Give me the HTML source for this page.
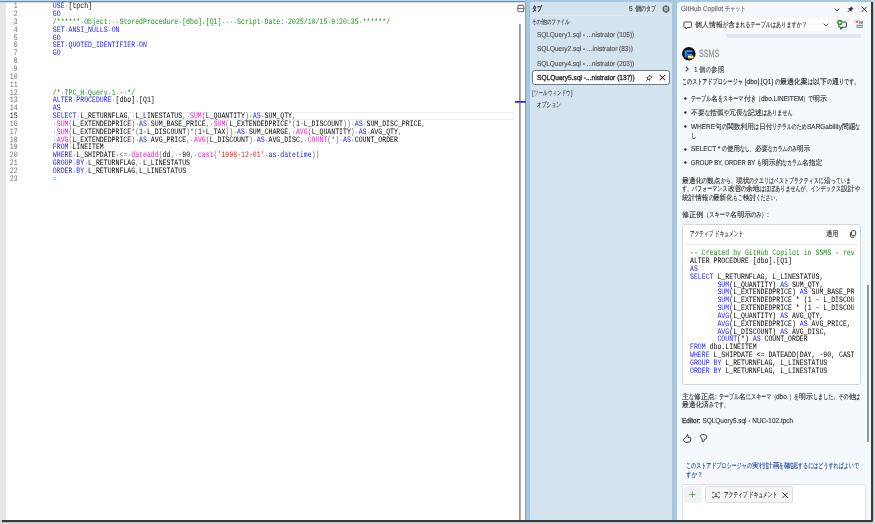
<!DOCTYPE html>
<html lang="ja"><head><meta charset="utf-8"><title>SSMS - GitHub Copilot</title>
<style>
html,body{margin:0;padding:0}
body{width:875px;height:524px;overflow:hidden;position:relative;background:#dedede;font-family:"Liberation Sans", sans-serif;text-rendering:geometricPrecision;-webkit-font-smoothing:antialiased}
div,span,svg{box-sizing:border-box}
.a{position:absolute}
.gl{will-change:transform}
.t{position:absolute;white-space:pre;height:12px;line-height:12px;overflow:visible;-webkit-text-stroke:0.13px}
.r{display:inline-block;white-space:pre;vertical-align:baseline}.r>span{display:inline-block;transform-origin:0 50%;white-space:pre}
.c{position:absolute;white-space:pre;font-family:"Liberation Mono", monospace;font-size:6.53px;letter-spacing:0.0105px;height:8px;line-height:8px;color:#000;transform:scaleY(1.27);transform-origin:0 50%}
.k{color:#1a1aff}.g{color:#149414}.f{color:#ff10d8}.s{color:#f01010}.o{color:#6e6e6e}.n{color:#000}.w{background:linear-gradient(#6ab8cf,#6ab8cf) 50% 54%/1.1px 0.9px no-repeat}.w2{color:#3d9fc0}
.ln{position:absolute;left:0;width:17.6px;text-align:right;font-family:"Liberation Mono", monospace;font-size:6.53px;height:8px;line-height:8px;color:#6a6a6a;transform:scaleY(1.27);transform-origin:0 50%}
</style></head><body>
<div class="a" style="left:2px;top:2px;width:870.5px;height:519.5px;background:#3a3a3a;border-radius:0 0 1.5px 0;box-shadow:0 0 1.6px 0 #505050"></div>
<div class="a" id="win" style="left:0;top:0;width:870.8px;height:519.8px;background:#a6c7df;overflow:hidden">
<div class="a" style="left:0;top:0;width:525.3px;height:1.4px;background:#b8d7ec"></div>
<div class="a" style="left:0;top:1.4px;width:525.3px;height:1px;background:#6f8fa9"></div>
<div class="a" style="left:0;top:2.4px;width:525.3px;height:518px;background:#fff"></div>
<div class="a" style="left:0;top:2.4px;width:5.8px;height:518px;background:#e6e7e8"></div>
<div class="a" style="left:0;top:2px;width:525px;height:1px;background:#d9dadc"></div>
<div class="a" style="left:525.3px;top:1.4px;width:0.8px;height:519px;background:#86a8c6"></div>
<div class="a" style="left:52px;top:112px;width:462px;height:8px;border:1px solid #eceef5;background:#fff"></div>
<div class="a" style="left:519px;top:24px;width:2px;height:496px;background:linear-gradient(90deg,#969696,#969696 55%,#cdcdcd)"></div>
<div class="a" style="left:515px;top:101px;width:11px;height:2px;background:linear-gradient(180deg,#3434d8,#3434d8 60%,#9a9aea)"></div>
<div class="a gl" style="left:0;top:0;width:525px;height:200px">
<div class="ln" style="top:3.25px">1</div>
<div class="c" style="left:52.8px;top:3.25px"><span class="k">USE</span><span class="w"> </span><span class="n">[tpch]</span></div>
<div class="ln" style="top:11.09px">2</div>
<div class="c" style="left:52.8px;top:11.09px"><span class="k">GO</span></div>
<div class="ln" style="top:18.94px">3</div>
<div class="c" style="left:52.8px;top:18.94px"><span class="g">/******</span><span class="w"> </span><span class="g">Object:</span><span class="w"> </span><span class="w"> </span><span class="g">StoredProcedure</span><span class="w"> </span><span class="g">[dbo].[Q1]</span><span class="w"> </span><span class="w"> </span><span class="w"> </span><span class="w"> </span><span class="g">Script</span><span class="w"> </span><span class="g">Date:</span><span class="w"> </span><span class="g">2025/10/15</span><span class="w"> </span><span class="g">9:20:35</span><span class="w"> </span><span class="g">******/</span></div>
<div class="ln" style="top:26.79px">4</div>
<div class="c" style="left:52.8px;top:26.79px"><span class="k">SET</span><span class="w"> </span><span class="k">ANSI_NULLS</span><span class="w"> </span><span class="k">ON</span></div>
<div class="ln" style="top:34.63px">5</div>
<div class="c" style="left:52.8px;top:34.63px"><span class="k">GO</span></div>
<div class="ln" style="top:42.48px">6</div>
<div class="c" style="left:52.8px;top:42.48px"><span class="k">SET</span><span class="w"> </span><span class="k">QUOTED_IDENTIFIER</span><span class="w"> </span><span class="k">ON</span></div>
<div class="ln" style="top:50.32px">7</div>
<div class="c" style="left:52.8px;top:50.32px"><span class="k">GO</span></div>
<div class="ln" style="top:58.16px">8</div>
<div class="ln" style="top:66.01px">9</div>
<div class="ln" style="top:73.86px">10</div>
<div class="ln" style="top:81.70px">11</div>
<div class="ln" style="top:89.55px">12</div>
<div class="c" style="left:52.8px;top:89.55px"><span class="g">/*</span><span class="w"> </span><span class="g">TPC_H</span><span class="w"> </span><span class="g">Query</span><span class="w"> </span><span class="g">1</span><span class="w"> </span><span class="g">-</span><span class="w"> </span><span class="g">*/</span></div>
<div class="ln" style="top:97.39px">13</div>
<div class="c" style="left:52.8px;top:97.39px"><span class="k">ALTER</span><span class="w"> </span><span class="k">PROCEDURE</span><span class="w"> </span><span class="n">[dbo]</span><span class="o">.</span><span class="n">[Q1]</span></div>
<div class="ln" style="top:105.23px">14</div>
<div class="c" style="left:52.8px;top:105.23px"><span class="k">AS</span></div>
<div class="ln" style="top:113.08px;color:#111">15</div>
<div class="c" style="left:52.8px;top:113.08px"><span class="k">SELECT</span><span class="w"> </span><span class="n">L_RETURNFLAG</span><span class="o">,</span><span class="w"> </span><span class="n">L_LINESTATUS</span><span class="o">,</span><span class="w"> </span><span class="f">SUM</span><span class="o">(</span><span class="n">L_QUANTITY</span><span class="o">)</span><span class="w"> </span><span class="k">AS</span><span class="w"> </span><span class="n">SUM_QTY</span><span class="o">,</span></div>
<div class="ln" style="top:120.92px">16</div>
<div class="c" style="left:52.8px;top:120.92px"><span class="w"> </span><span class="f">SUM</span><span class="o">(</span><span class="n">L_EXTENDEDPRICE</span><span class="o">)</span><span class="w"> </span><span class="k">AS</span><span class="w"> </span><span class="n">SUM_BASE_PRICE</span><span class="o">,</span><span class="w"> </span><span class="f">SUM</span><span class="o">(</span><span class="n">L_EXTENDEDPRICE</span><span class="o">*(</span><span class="n">1</span><span class="o">-</span><span class="n">L_DISCOUNT</span><span class="o">))</span><span class="w"> </span><span class="k">AS</span><span class="w"> </span><span class="n">SUM_DISC_PRICE</span><span class="o">,</span></div>
<div class="ln" style="top:128.77px">17</div>
<div class="c" style="left:52.8px;top:128.77px"><span class="w"> </span><span class="f">SUM</span><span class="o">(</span><span class="n">L_EXTENDEDPRICE</span><span class="o">*(</span><span class="n">1</span><span class="o">-</span><span class="n">L_DISCOUNT</span><span class="o">)*(</span><span class="n">1</span><span class="o">+</span><span class="n">L_TAX</span><span class="o">))</span><span class="w"> </span><span class="k">AS</span><span class="w"> </span><span class="n">SUM_CHARGE</span><span class="o">,</span><span class="w"> </span><span class="f">AVG</span><span class="o">(</span><span class="n">L_QUANTITY</span><span class="o">)</span><span class="w"> </span><span class="k">AS</span><span class="w"> </span><span class="n">AVG_QTY</span><span class="o">,</span></div>
<div class="ln" style="top:136.62px">18</div>
<div class="c" style="left:52.8px;top:136.62px"><span class="w"> </span><span class="f">AVG</span><span class="o">(</span><span class="n">L_EXTENDEDPRICE</span><span class="o">)</span><span class="w"> </span><span class="k">AS</span><span class="w"> </span><span class="n">AVG_PRICE</span><span class="o">,</span><span class="w"> </span><span class="f">AVG</span><span class="o">(</span><span class="n">L_DISCOUNT</span><span class="o">)</span><span class="w"> </span><span class="k">AS</span><span class="w"> </span><span class="n">AVG_DISC</span><span class="o">,</span><span class="w"> </span><span class="f">COUNT</span><span class="o">(*)</span><span class="w"> </span><span class="k">AS</span><span class="w"> </span><span class="n">COUNT_ORDER</span></div>
<div class="ln" style="top:144.46px">19</div>
<div class="c" style="left:52.8px;top:144.46px"><span class="k">FROM</span><span class="w"> </span><span class="n">LINEITEM</span></div>
<div class="ln" style="top:152.31px">20</div>
<div class="c" style="left:52.8px;top:152.31px"><span class="k">WHERE</span><span class="w"> </span><span class="n">L_SHIPDATE</span><span class="w"> </span><span class="o">&lt;=</span><span class="w"> </span><span class="f">dateadd</span><span class="o">(</span><span class="n">dd</span><span class="o">,</span><span class="w"> </span><span class="o">-</span><span class="n">90</span><span class="o">,</span><span class="w"> </span><span class="f">cast</span><span class="o">(</span><span class="s">'1998-12-01'</span><span class="w"> </span><span class="k">as</span><span class="w"> </span><span class="k">datetime</span><span class="o">))</span></div>
<div class="ln" style="top:160.15px">21</div>
<div class="c" style="left:52.8px;top:160.15px"><span class="k">GROUP</span><span class="w"> </span><span class="k">BY</span><span class="w"> </span><span class="n">L_RETURNFLAG</span><span class="o">,</span><span class="w"> </span><span class="n">L_LINESTATUS</span></div>
<div class="ln" style="top:168.00px">22</div>
<div class="c" style="left:52.8px;top:168.00px"><span class="k">ORDER</span><span class="w"> </span><span class="k">BY</span><span class="w"> </span><span class="n">L_RETURNFLAG</span><span class="o">,</span><span class="n">L_LINESTATUS</span></div>
<div class="ln" style="top:175.84px">23</div>
<div class="c" style="left:52.8px;top:175.84px"><span class="w2">=</span></div>
</div>
<svg class="a" style="left:515.5px;top:3.5px" width="10" height="10" viewBox="0 0 10 10"><rect x="1.9" y="1.1" width="5.8" height="6.7" rx="1.5" fill="none" stroke="#6c6c6c" stroke-width="1.1"/><path d="M0.9 4.45H8.5" stroke="#777" stroke-width="1.1"/></svg>
<div class="a" style="left:529.6px;top:2.1px;width:142.9px;height:520px;background:#d4e4ef;border-radius:2.5px 2.5px 0 0"></div>
<div class="a" style="left:531px;top:15px;width:140px;height:0.8px;background:#dde9f2"></div>
<div class="a" style="left:532px;top:70.4px;width:137.9px;height:14.7px;background:#fff;border:1.1px solid #64798e;border-radius:2.6px"></div>
<svg class="a" style="left:661.5px;top:4.9px" width="8" height="8" viewBox="0 0 16 16"><path fill="#5e5e5e" fill-rule="evenodd" d="M5.62 0.68L10.38 0.68L10.48 2.10L11.87 2.90L13.15 2.28L15.53 6.40L14.35 7.20L14.35 8.80L15.53 9.60L13.15 13.72L11.87 13.10L10.48 13.90L10.38 15.32L5.62 15.32L5.52 13.90L4.13 13.10L2.85 13.72L0.47 9.60L1.65 8.80L1.65 7.20L0.47 6.40L2.85 2.28L4.13 2.90L5.52 2.10ZM8 3.7a4.3 4.3 0 1 0 0 8.6a4.3 4.3 0 1 0 0-8.6Z"/><path fill="#747474" fill-rule="evenodd" d="M8 5.0a3.0 3.0 0 1 0 0 6.0a3.0 3.0 0 1 0 0-6.0ZM8 6.5a1.5 1.5 0 1 0 0 3.0a1.5 1.5 0 1 0 0-3.0Z"/></svg>
<svg class="a" style="left:645px;top:74px" width="8" height="8" viewBox="0 0 16 16"><path fill="none" stroke="#333" stroke-width="1.9" stroke-linejoin="round" d="M9.5 2.500l4 4-1.500.700-2.500 2.500-.500 3-5.700-5.700 3-.500 2.500-2.500zM5.800 10.200 2.500 13.500"/></svg>
<svg class="a" style="left:659.3px;top:74.4px" width="7" height="7" viewBox="0 0 14 14"><path stroke="#2a2a2a" stroke-width="2.1" d="M1.500 1.500l11 11M12.500 1.500l-11 11"/></svg>
<div class="a" style="left:676.9px;top:2.1px;width:194px;height:520px;background:#f5f8fc;border-radius:2.5px 0 0 0"></div>
<svg class="a" style="left:833.7px;top:6.6px" width="6" height="6" viewBox="0 0 12 12"><path fill="none" stroke="#505050" stroke-width="1.9" d="M1.200 3.200 6 8l4.800-4.800"/></svg>
<svg class="a" style="left:847px;top:5.7px" width="6.8" height="6.8" viewBox="0 0 16 16"><path fill="#2e2e2e" stroke="#2e2e2e" stroke-width="1" stroke-linejoin="round" d="M9.500 1.500l5 5-1.800.700-2.200 2.200-.800 3.400-6.500-6.500 3.400-.800 2.200-2.200z"/><path stroke="#2e2e2e" stroke-width="1.900" d="M6 10 1.200 14.800"/></svg>
<svg class="a" style="left:860.7px;top:5.8px" width="6.5" height="6.5" viewBox="0 0 14 14"><path stroke="#3a3a3a" stroke-width="2" d="M1 1l12 12M13 1 1 13"/></svg>
<div class="a" style="left:725.9px;top:34px;width:135.5px;height:3.6px;background:#e3e5f7;border-radius:0 0 2.500px 2.500px"></div>
<div class="a" style="left:679px;top:17.6px;width:153.2px;height:13.1px;background:#fcfdff;border-radius:2.5px"></div>
<svg class="a" style="left:683.1px;top:21px" width="9.4" height="8.8" viewBox="0 0 9.4 8.8"><path fill="none" stroke="#484848" stroke-width="1" stroke-linejoin="round" d="M1.800 1h5.900q0.900 0 0.900 0.900v3.700q0 0.900-0.900 0.900H4.600L3 8V6.500H1.800q-0.900 0-0.900-0.900V1.900q0-0.900 0.900-0.900z"/></svg>
<svg class="a" style="left:822.5px;top:21.900px" width="6" height="6" viewBox="0 0 12 12"><path fill="none" stroke="#484848" stroke-width="1.9" d="M1.200 3.200 6 8l4.800-4.800"/></svg>
<svg class="a" style="left:835.5px;top:18.8px" width="12" height="12" viewBox="0 0 24 24"><path fill="none" stroke="#484848" stroke-width="2.200" stroke-linejoin="round" d="M12.500 6h5.500q3 0 3 3v4.500q0 3-3 3h-5l-3.500 3.500v-3.500h-1q-3 0-3-3v-1"/><circle cx="7.600" cy="7" r="5.300" fill="#12a012"/><path stroke="#fff" stroke-width="1.900" d="M7.600 4v6M4.600 7h6"/></svg>
<svg class="a" style="left:853.5px;top:19px" width="11" height="11" viewBox="0 0 22 22"><path stroke="#e0283c" stroke-width="1.800" d="M3.200 2.600l5 5.600M8.200 2.600l-5 5.600"/><rect x="10" y="4.500" width="8" height="4.800" fill="#909090"/><path stroke="#666" stroke-width="1.800" d="M4.800 12.600h13.200M4.800 16.400h13.200"/></svg>
<svg class="a" style="left:681.2px;top:45.8px" width="15.6" height="15.6" viewBox="-2.35 -2.35 36.7 36.7"><defs><linearGradient id="lg" x1="0" y1="1" x2="1" y2="0"><stop offset="0" stop-color="#3f63e8"/><stop offset="0.5" stop-color="#1f8ff5"/><stop offset="1" stop-color="#14b8ff"/></linearGradient></defs><circle cx="16" cy="16" r="17.8" fill="#fff" opacity="0.85"/><circle cx="16" cy="16" r="16" fill="#0b0b0e"/><path fill="url(#lg)" d="M10 7.500h12.500c3.500 0 3.500 5 0 5H11.500v3h12v4.500h-12V25h-2c-2.500 0-3.500-1.500-3.500-4V11.500c0-2.500 1.500-4 4-4z"/><path fill="#0d2a66" opacity="0.75" d="M12 12.500h11v3H12z"/><rect x="13.400" y="20" width="13.600" height="6.800" rx="1" fill="#ffd23e"/><rect x="14.400" y="21" width="11.600" height="2" fill="#fff2a8"/></svg>
<svg class="a" style="left:684.4px;top:66.300px" width="6" height="6" viewBox="0 0 12 12"><path fill="none" stroke="#3a3a3a" stroke-width="2.1" d="M3.500 1.300 8.200 6l-4.700 4.700"/></svg>
<svg class="a" style="left:683px;top:95.9px" width="5" height="5" viewBox="0 0 5 5"><circle cx="2.4" cy="2.5" r="1.2" fill="#2a2a2a"/></svg>
<svg class="a" style="left:683px;top:110.1px" width="5" height="5" viewBox="0 0 5 5"><circle cx="2.4" cy="2.5" r="1.2" fill="#2a2a2a"/></svg>
<svg class="a" style="left:683px;top:124.2px" width="5" height="5" viewBox="0 0 5 5"><circle cx="2.4" cy="2.5" r="1.2" fill="#2a2a2a"/></svg>
<svg class="a" style="left:683px;top:146.5px" width="5" height="5" viewBox="0 0 5 5"><circle cx="2.4" cy="2.5" r="1.2" fill="#2a2a2a"/></svg>
<svg class="a" style="left:683px;top:160.4px" width="5" height="5" viewBox="0 0 5 5"><circle cx="2.4" cy="2.5" r="1.2" fill="#2a2a2a"/></svg>
<div class="a" style="left:682.1px;top:224.3px;width:178.8px;height:160.5px;background:#fff;border:1px solid #d3d6db;border-radius:2.8px"></div>
<div class="a" style="left:684.5px;top:243.700px;width:174.500px;height:0.9px;background:#ecedf0"></div>
<svg class="a" style="left:849.4px;top:229.500px" width="8" height="8" viewBox="0 0 16 16"><rect x="5.200" y="1.300" width="8" height="10" rx="2" fill="none" stroke="#3c3c3c" stroke-width="2"/><path fill="none" stroke="#3c3c3c" stroke-width="2" d="M2.800 4.500v7.500c0 1.600.800 2.400 2.400 2.400h5.800"/></svg>
<div class="a gl" style="left:690.4px;top:245px;width:163.9px;height:135px;overflow:hidden">
<div class="c" style="left:0;top:5.30px"><span class="g">-- Created by GitHub Copilot in SSMS - review carefully before executing</span></div>
<div class="c" style="left:0;top:13.13px"><span class="n">ALTER PROCEDURE [dbo].[Q1]</span></div>
<div class="c" style="left:0;top:20.96px"><span class="k">AS</span></div>
<div class="c" style="left:0;top:28.79px"><span class="k">SELECT</span><span class="n"> L_RETURNFLAG, L_LINESTATUS,</span></div>
<div class="c" style="left:0;top:36.62px"><span class="n">       </span><span class="k">SUM</span><span class="n">(L_QUANTITY) </span><span class="k">AS</span><span class="n"> SUM_QTY,</span></div>
<div class="c" style="left:0;top:44.45px"><span class="n">       </span><span class="k">SUM</span><span class="n">(L_EXTENDEDPRICE) </span><span class="k">AS</span><span class="n"> SUM_BASE_PRICE,</span></div>
<div class="c" style="left:0;top:52.28px"><span class="n">       </span><span class="k">SUM</span><span class="n">(L_EXTENDEDPRICE * (1 - L_DISCOUNT)) </span><span class="k">AS</span><span class="n"> SUM_DISC_PRICE,</span></div>
<div class="c" style="left:0;top:60.11px"><span class="n">       </span><span class="k">SUM</span><span class="n">(L_EXTENDEDPRICE * (1 - L_DISCOUNT) * (1 + L_TAX)) </span><span class="k">AS</span><span class="n"> SUM_CHARGE,</span></div>
<div class="c" style="left:0;top:67.94px"><span class="n">       </span><span class="k">AVG</span><span class="n">(L_QUANTITY) </span><span class="k">AS</span><span class="n"> AVG_QTY,</span></div>
<div class="c" style="left:0;top:75.77px"><span class="n">       </span><span class="k">AVG</span><span class="n">(L_EXTENDEDPRICE) </span><span class="k">AS</span><span class="n"> AVG_PRICE,</span></div>
<div class="c" style="left:0;top:83.60px"><span class="n">       </span><span class="k">AVG</span><span class="n">(L_DISCOUNT) </span><span class="k">AS</span><span class="n"> AVG_DISC,</span></div>
<div class="c" style="left:0;top:91.43px"><span class="n">       </span><span class="k">COUNT</span><span class="n">(*) </span><span class="k">AS</span><span class="n"> COUNT_ORDER</span></div>
<div class="c" style="left:0;top:99.26px"><span class="k">FROM</span><span class="n"> dbo.LINEITEM</span></div>
<div class="c" style="left:0;top:107.09px"><span class="k">WHERE</span><span class="n"> L_SHIPDATE &lt;= DATEADD(DAY, -90, CAST('1998-12-01' AS DATETIME))</span></div>
<div class="c" style="left:0;top:114.92px"><span class="k">GROUP BY</span><span class="n"> L_RETURNFLAG, L_LINESTATUS</span></div>
<div class="c" style="left:0;top:122.75px"><span class="k">ORDER BY</span><span class="n"> L_RETURNFLAG, L_LINESTATUS</span></div>
</div>
<div class="a" style="left:867px;top:285px;width:2px;height:157px;background:linear-gradient(90deg,#b8b8b8,#7c7c7c 50%,#b0b0b0)"></div>
<svg class="a" style="left:682.6px;top:433.8px" width="9" height="9" viewBox="0 0 9 9"><path fill="none" stroke="#3a3a3a" stroke-width="1" stroke-linejoin="round" stroke-linecap="round" d="M4.600 0.900q0.900 0.300 0.700 1.600l-0.200 1h1.700q1.200 0.100 1 1.300l-0.500 2.300q-0.300 1.100-1.400 1.100l-2.900 0.200q-0.800 0-1.500-0.800l-0.800-1q-0.600-0.900 0.200-1.600l1.800-1.200q1-0.900 1.200-2.100q0.100-0.900 0.700-0.800z"/></svg>
<svg class="a" style="left:698.7px;top:433.8px" width="9" height="9" viewBox="0 0 9 9"><path fill="none" stroke="#3a3a3a" stroke-width="1" stroke-linejoin="round" stroke-linecap="round" d="M1.300 2.500q-0.600-0.900 0.400-1.300l1.600-0.600q0.900-0.300 1.800 0l1.800 0.700q1.100 0.500 0.900 1.500l-0.300 1.300q-0.300 1-1.300 1.100l-1 0.100l-0.300 1.800q-0.200 0.900-0.900 0.700q-0.700-0.200-0.800-1.100l-0.200-1.700q-0.100-0.900-0.700-1.400z"/></svg>
<div class="a" style="left:681.7px;top:484.400px;width:184px;height:40px;background:#fff;border:0.9px solid #dde3ec;border-radius:2.5px"></div>
<div class="a" style="left:683.6px;top:486.300px;width:18.800px;height:16.700px;background:#f1f2f4;border-radius:2.4px"></div>
<svg class="a" style="left:689px;top:491.200px" width="7" height="7" viewBox="0 0 14 14"><path stroke="#2a9a2a" stroke-width="1.500" d="M7 1v12M1 7h12"/></svg>
<div class="a" style="left:704.700px;top:486.300px;width:88.400px;height:16.700px;background:#f4f5f7;border:0.9px solid #dadde3;border-radius:2.4px"></div>
<svg class="a" style="left:712.200px;top:490.700px" width="8" height="8" viewBox="0 0 16 16"><path fill="none" stroke="#3c3c3c" stroke-width="1.700" d="M1.500 5.200V2.500H4.800M11.200 2.500h3.300V5.200M14.500 10.800v2.700H11.200M4.800 13.500H1.500V10.800"/><circle cx="8" cy="6.200" r="1.900" fill="#444"/><path fill="#444" d="M4.300 12.200c0-2.400 1.600-3.400 3.700-3.400s3.700 1 3.700 3.400z"/></svg>
<svg class="a" style="left:781.600px;top:491.500px" width="6.400" height="6.400" viewBox="0 0 14 14"><path stroke="#333" stroke-width="2" d="M1 1l12 12M13 1 1 13"/></svg>
</div>
<div class="t" style="left:531.8px;top:2.61px;font-size:7.2px;color:#1e1e1e;-webkit-text-stroke:0.3px"><span class="r" style="width:10.20px"><span style="transform:scaleX(0.6930)">タブ</span></span></div>
<div class="t" style="left:629.4px;top:2.61px;font-size:7.2px;color:#3a3a3a"><span class="r" style="width:5.40px"><span style="transform:scaleX(0.9000)">5 </span></span><span class="r" style="width:6.71px"><span style="transform:scaleX(0.9342)">個</span></span><span class="r" style="width:14.89px"><span style="transform:scaleX(0.6742)">のタブ</span></span></div>
<div class="t" style="left:532.2px;top:16.81px;font-size:6.6px;color:#4a4a4a"><span class="r" style="width:9.05px"><span style="transform:scaleX(0.6704)">その</span></span><span class="r" style="width:6.13px"><span style="transform:scaleX(0.9289)">他</span></span><span class="r" style="width:22.62px"><span style="transform:scaleX(0.6704)">のファイル</span></span></div>
<div class="t" style="left:537.0px;top:28.61px;font-size:7.2px;color:#505050"><span class="r" style="width:97.20px"><span style="transform:scaleX(0.8946)">SQLQuery1.sql - ...nistrator (105))</span></span></div>
<div class="t" style="left:537.0px;top:42.61px;font-size:7.2px;color:#505050"><span class="r" style="width:95.80px"><span style="transform:scaleX(0.9016)">SQLQuery2.sql - ...inistrator (83))</span></span></div>
<div class="t" style="left:537.0px;top:57.61px;font-size:7.2px;color:#505050"><span class="r" style="width:97.20px"><span style="transform:scaleX(0.8946)">SQLQuery4.sql - ...nistrator (203))</span></span></div>
<div class="t" style="left:537.0px;top:71.61px;font-size:7.2px;color:#1e1e1e;-webkit-text-stroke:0.3px"><span class="r" style="width:97.70px"><span style="transform:scaleX(0.9160)">SQLQuery5.sql -...nistrator (137))</span></span></div>
<div class="t" style="left:532.0px;top:87.81px;font-size:6.6px;color:#4a4a4a"><span class="r" style="width:1.52px"><span style="transform:scaleX(0.8250)">[</span></span><span class="r" style="width:13.45px"><span style="transform:scaleX(0.6693)">ツール</span></span><span class="r" style="width:1.52px"><span style="transform:scaleX(0.8250)"> </span></span><span class="r" style="width:22.59px"><span style="transform:scaleX(0.6693)">ウィンドウ</span></span><span class="r" style="width:1.52px"><span style="transform:scaleX(0.8250)">]</span></span></div>
<div class="t" style="left:537.0px;top:98.61px;font-size:7.2px;color:#444"><span class="r" style="width:24.00px"><span style="transform:scaleX(0.6525)">オプション</span></span></div>
<div class="t" style="left:681.0px;top:2.61px;font-size:7.2px;color:#6a6a6a"><span class="r" style="width:43.88px"><span style="transform:scaleX(0.9000)">GitHub Copilot </span></span><span class="r" style="width:20.73px"><span style="transform:scaleX(0.7040)">チャット</span></span></div>
<div class="t" style="left:695.4px;top:18.61px;font-size:7.2px;color:#333"><span class="r" style="width:27.92px"><span style="transform:scaleX(0.9711)">個人情報</span></span><span class="r" style="width:5.16px"><span style="transform:scaleX(0.7008)">が</span></span><span class="r" style="width:6.98px"><span style="transform:scaleX(0.9711)">含</span></span><span class="r" style="width:71.94px"><span style="transform:scaleX(0.7008)">まれるテーブルはありますか？</span></span></div>
<div class="t" style="left:699.4px;top:48.46px;font-size:10.5px;color:#8a8a8a"><span class="r" style="width:20.40px"><span style="transform:scaleX(0.6854)">SSMS</span></span></div>
<div class="t" style="left:693.5px;top:63.61px;font-size:7.2px;color:#444"><span class="r" style="width:5.40px"><span style="transform:scaleX(0.9000)">1 </span></span><span class="r" style="width:6.71px"><span style="transform:scaleX(0.9340)">個</span></span><span class="r" style="width:4.96px"><span style="transform:scaleX(0.6740)">の</span></span><span class="r" style="width:13.43px"><span style="transform:scaleX(0.9340)">参照</span></span></div>
<div class="t" style="left:682.2px;top:75.61px;font-size:7.2px;color:#222"><span class="r" style="width:60.99px"><span style="transform:scaleX(0.6922)">このストアドプロシージャ</span></span><span class="r" style="width:32.01px"><span style="transform:scaleX(0.9000)"> [dbo].[Q1] </span></span><span class="r" style="width:5.09px"><span style="transform:scaleX(0.6922)">の</span></span><span class="r" style="width:27.58px"><span style="transform:scaleX(0.9592)">最適化案</span></span><span class="r" style="width:5.09px"><span style="transform:scaleX(0.6922)">は</span></span><span class="r" style="width:13.79px"><span style="transform:scaleX(0.9592)">以下</span></span><span class="r" style="width:5.09px"><span style="transform:scaleX(0.6922)">の</span></span><span class="r" style="width:6.89px"><span style="transform:scaleX(0.9592)">通</span></span><span class="r" style="width:20.26px"><span style="transform:scaleX(0.6922)">りです。</span></span></div>
<div class="t" style="left:691.1px;top:92.61px;font-size:7.2px;color:#333"><span class="r" style="width:20.36px"><span style="transform:scaleX(0.6955)">テーブル</span></span><span class="r" style="width:6.93px"><span style="transform:scaleX(0.9638)">名</span></span><span class="r" style="width:25.47px"><span style="transform:scaleX(0.6955)">をスキーマ</span></span><span class="r" style="width:6.93px"><span style="transform:scaleX(0.9638)">付</span></span><span class="r" style="width:10.12px"><span style="transform:scaleX(0.6955)">き（</span></span><span class="r" style="width:42.43px"><span style="transform:scaleX(0.9000)">dbo.LINEITEM</span></span><span class="r" style="width:10.12px"><span style="transform:scaleX(0.6955)">）で</span></span><span class="r" style="width:13.85px"><span style="transform:scaleX(0.9638)">明示</span></span></div>
<div class="t" style="left:691.1px;top:106.61px;font-size:7.2px;color:#333"><span class="r" style="width:13.86px"><span style="transform:scaleX(0.9640)">不要</span></span><span class="r" style="width:5.12px"><span style="transform:scaleX(0.6957)">な</span></span><span class="r" style="width:13.86px"><span style="transform:scaleX(0.9640)">括弧</span></span><span class="r" style="width:5.12px"><span style="transform:scaleX(0.6957)">や</span></span><span class="r" style="width:13.86px"><span style="transform:scaleX(0.9640)">冗長</span></span><span class="r" style="width:5.12px"><span style="transform:scaleX(0.6957)">な</span></span><span class="r" style="width:13.86px"><span style="transform:scaleX(0.9640)">記述</span></span><span class="r" style="width:30.71px"><span style="transform:scaleX(0.6957)">はありません</span></span></div>
<div class="t" style="left:691.1px;top:120.61px;font-size:7.2px;color:#333"><span class="r" style="width:24.09px"><span style="transform:scaleX(0.9000)">WHERE</span></span><span class="r" style="width:6.72px"><span style="transform:scaleX(0.9351)">句</span></span><span class="r" style="width:4.97px"><span style="transform:scaleX(0.6748)">の</span></span><span class="r" style="width:26.88px"><span style="transform:scaleX(0.9351)">関数利用</span></span><span class="r" style="width:4.97px"><span style="transform:scaleX(0.6748)">は</span></span><span class="r" style="width:13.44px"><span style="transform:scaleX(0.9351)">日付</span></span><span class="r" style="width:34.75px"><span style="transform:scaleX(0.6748)">リテラルのため</span></span><span class="r" style="width:34.88px"><span style="transform:scaleX(0.9000)">SARGability</span></span><span class="r" style="width:13.44px"><span style="transform:scaleX(0.9351)">問題</span></span><span class="r" style="width:4.97px"><span style="transform:scaleX(0.6748)">な</span></span></div>
<div class="t" style="left:691.1px;top:129.61px;font-size:7.2px;color:#333"><span class="r" style="width:5.50px"><span style="transform:scaleX(0.7473)">し</span></span></div>
<div class="t" style="left:691.1px;top:142.61px;font-size:7.2px;color:#333"><span class="r" style="width:31.16px"><span style="transform:scaleX(0.9000)">SELECT * </span></span><span class="r" style="width:4.87px"><span style="transform:scaleX(0.6619)">の</span></span><span class="r" style="width:13.18px"><span style="transform:scaleX(0.9172)">使用</span></span><span class="r" style="width:14.50px"><span style="transform:scaleX(0.6619)">なし、</span></span><span class="r" style="width:13.18px"><span style="transform:scaleX(0.9172)">必要</span></span><span class="r" style="width:29.22px"><span style="transform:scaleX(0.6619)">なカラムのみ</span></span><span class="r" style="width:13.18px"><span style="transform:scaleX(0.9172)">明示</span></span></div>
<div class="t" style="left:691.1px;top:156.61px;font-size:7.2px;color:#333"><span class="r" style="width:65.84px"><span style="transform:scaleX(0.8200)">GROUP BY, ORDER BY </span></span><span class="r" style="width:5.00px"><span style="transform:scaleX(0.6800)">も</span></span><span class="r" style="width:20.32px"><span style="transform:scaleX(0.9423)">明示的</span></span><span class="r" style="width:20.02px"><span style="transform:scaleX(0.6800)">なカラム</span></span><span class="r" style="width:20.32px"><span style="transform:scaleX(0.9423)">名指定</span></span></div>
<div class="t" style="left:682.2px;top:174.61px;font-size:7.2px;color:#333"><span class="r" style="width:20.25px"><span style="transform:scaleX(0.9393)">最適化</span></span><span class="r" style="width:4.99px"><span style="transform:scaleX(0.6779)">の</span></span><span class="r" style="width:13.50px"><span style="transform:scaleX(0.9393)">観点</span></span><span class="r" style="width:14.85px"><span style="transform:scaleX(0.6779)">から、</span></span><span class="r" style="width:13.50px"><span style="transform:scaleX(0.9393)">現状</span></span><span class="r" style="width:74.80px"><span style="transform:scaleX(0.6779)">のクエリはベストプラクティスに</span></span><span class="r" style="width:6.75px"><span style="transform:scaleX(0.9393)">沿</span></span><span class="r" style="width:19.95px"><span style="transform:scaleX(0.6779)">っていま</span></span></div>
<div class="t" style="left:682.2px;top:182.61px;font-size:7.2px;color:#333"><span class="r" style="width:45.47px"><span style="transform:scaleX(0.6902)">す。パフォーマンス</span></span><span class="r" style="width:13.75px"><span style="transform:scaleX(0.9565)">改善</span></span><span class="r" style="width:5.08px"><span style="transform:scaleX(0.6902)">の</span></span><span class="r" style="width:13.75px"><span style="transform:scaleX(0.9565)">余地</span></span><span class="r" style="width:81.12px"><span style="transform:scaleX(0.6902)">はほぼありませんが、インデックス</span></span><span class="r" style="width:13.75px"><span style="transform:scaleX(0.9565)">設計</span></span><span class="r" style="width:5.08px"><span style="transform:scaleX(0.6902)">や</span></span></div>
<div class="t" style="left:682.2px;top:191.61px;font-size:7.2px;color:#333"><span class="r" style="width:26.37px"><span style="transform:scaleX(0.9173)">統計情報</span></span><span class="r" style="width:4.87px"><span style="transform:scaleX(0.6620)">の</span></span><span class="r" style="width:19.78px"><span style="transform:scaleX(0.9173)">最新化</span></span><span class="r" style="width:9.74px"><span style="transform:scaleX(0.6620)">もご</span></span><span class="r" style="width:13.19px"><span style="transform:scaleX(0.9173)">検討</span></span><span class="r" style="width:24.25px"><span style="transform:scaleX(0.6620)">ください。</span></span></div>
<div class="t" style="left:682.2px;top:208.61px;font-size:7.2px;color:#333"><span class="r" style="width:21.40px"><span style="transform:scaleX(0.9925)">修正例</span></span><span class="r" style="width:26.11px"><span style="transform:scaleX(0.7162)">（スキーマ</span></span><span class="r" style="width:21.40px"><span style="transform:scaleX(0.9925)">名明示</span></span><span class="r" style="width:15.69px"><span style="transform:scaleX(0.7162)">のみ）</span></span><span class="r" style="width:1.80px"><span style="transform:scaleX(0.9000)">:</span></span></div>
<div class="t" style="left:690.0px;top:227.61px;font-size:7.2px;color:#333"><span class="r" style="width:23.41px"><span style="transform:scaleX(0.6364)">アクティブ</span></span><span class="r" style="width:1.80px"><span style="transform:scaleX(0.9000)"> </span></span><span class="r" style="width:28.09px"><span style="transform:scaleX(0.6364)">ドキュメント</span></span></div>
<div class="t" style="left:826.2px;top:227.61px;font-size:7.2px;color:#333"><span class="r" style="width:12.40px"><span style="transform:scaleX(0.8626)">適用</span></span></div>
<div class="t" style="left:682.2px;top:390.61px;font-size:7.2px;color:#333"><span class="r" style="width:6.93px"><span style="transform:scaleX(0.9638)">主</span></span><span class="r" style="width:5.12px"><span style="transform:scaleX(0.6955)">な</span></span><span class="r" style="width:20.78px"><span style="transform:scaleX(0.9638)">修正点</span></span><span class="r" style="width:3.60px"><span style="transform:scaleX(0.9000)">: </span></span><span class="r" style="width:20.35px"><span style="transform:scaleX(0.6955)">テーブル</span></span><span class="r" style="width:6.93px"><span style="transform:scaleX(0.9638)">名</span></span><span class="r" style="width:30.47px"><span style="transform:scaleX(0.6955)">にスキーマ（</span></span><span class="r" style="width:12.60px"><span style="transform:scaleX(0.9000)">dbo.</span></span><span class="r" style="width:10.12px"><span style="transform:scaleX(0.6955)">）を</span></span><span class="r" style="width:13.85px"><span style="transform:scaleX(0.9638)">明示</span></span><span class="r" style="width:35.70px"><span style="transform:scaleX(0.6955)">しました。その</span></span><span class="r" style="width:6.93px"><span style="transform:scaleX(0.9638)">他</span></span><span class="r" style="width:5.12px"><span style="transform:scaleX(0.6955)">は</span></span></div>
<div class="t" style="left:682.2px;top:398.61px;font-size:7.2px;color:#333"><span class="r" style="width:26.81px"><span style="transform:scaleX(0.9324)">最適化済</span></span><span class="r" style="width:19.69px"><span style="transform:scaleX(0.6729)">みです。</span></span></div>
<div class="t" style="left:682.2px;top:414.61px;font-size:7.2px;color:#333"><span class="r" style="width:111.10px"><span style="transform:scaleX(0.8971)"><b style="font-weight:normal;-webkit-text-stroke:0.3px">Editor:</b> SQLQuery5.sql - NUC-102.tpch</span></span></div>
<div class="t" style="left:685.9px;top:459.61px;font-size:7.2px;color:#1c4a9a"><span class="r" style="width:65.99px"><span style="transform:scaleX(0.6912)">このストアドプロシージャの</span></span><span class="r" style="width:27.54px"><span style="transform:scaleX(0.9578)">実行計画</span></span><span class="r" style="width:5.09px"><span style="transform:scaleX(0.6912)">を</span></span><span class="r" style="width:13.77px"><span style="transform:scaleX(0.9578)">確認</span></span><span class="r" style="width:61.02px"><span style="transform:scaleX(0.6912)">するにはどうすればよいで</span></span></div>
<div class="t" style="left:685.9px;top:468.61px;font-size:7.2px;color:#1c4a9a"><span class="r" style="width:16.90px"><span style="transform:scaleX(0.7715)">すか？</span></span></div>
<div class="t" style="left:723.9px;top:488.61px;font-size:7.2px;color:#333"><span class="r" style="width:23.45px"><span style="transform:scaleX(0.6377)">アクティブ</span></span><span class="r" style="width:1.80px"><span style="transform:scaleX(0.9000)"> </span></span><span class="r" style="width:28.15px"><span style="transform:scaleX(0.6377)">ドキュメント</span></span></div>
</body></html>
